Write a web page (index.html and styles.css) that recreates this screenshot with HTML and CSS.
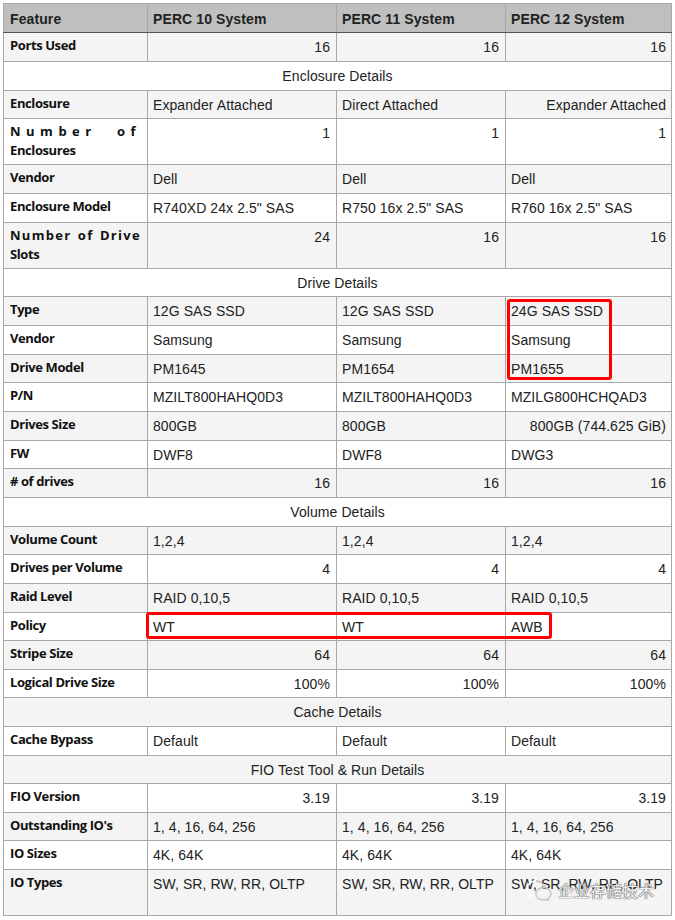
FILE: index.html
```html
<!DOCTYPE html>
<html lang="en">
<head>
<meta charset="utf-8">
<title>PERC comparison</title>
<link rel="stylesheet" href="styles.css">
</head>
<body>
<div class="sheet">
<table class="spec">
<colgroup><col class="c1"><col class="c2"><col class="c3"><col class="c4"></colgroup>
<thead><tr class="r29"><th>Feature</th><th>PERC 10 System</th><th>PERC 11 System</th><th>PERC 12 System</th></tr></thead>
<tbody>
<tr class="r29"><td class="k">Ports Used</td><td class="n">16</td><td class="n">16</td><td class="n">16</td></tr>
<tr class="r29"><td class="s" colspan="4">Enclosure Details</td></tr>
<tr class="r28"><td class="k">Enclosure</td><td>Expander Attached</td><td>Direct Attached</td><td class="n">Expander Attached</td></tr>
<tr class="r46"><td class="k"><span class="j wide">Number of</span>Enclosures</td><td class="n">1</td><td class="n">1</td><td class="n">1</td></tr>
<tr class="r29"><td class="k">Vendor</td><td>Dell</td><td>Dell</td><td>Dell</td></tr>
<tr class="r29"><td class="k">Enclosure Model</td><td>R740XD 24x 2.5" SAS</td><td>R750 16x 2.5" SAS</td><td>R760 16x 2.5" SAS</td></tr>
<tr class="r46"><td class="k"><span class="j mid">Number of Drive</span>Slots</td><td class="n">24</td><td class="n">16</td><td class="n">16</td></tr>
<tr class="r28"><td class="s" colspan="4">Drive Details</td></tr>
<tr class="r29"><td class="k">Type</td><td>12G SAS SSD</td><td>12G SAS SSD</td><td>24G SAS SSD</td></tr>
<tr class="r29"><td class="k">Vendor</td><td>Samsung</td><td>Samsung</td><td>Samsung</td></tr>
<tr class="r28"><td class="k">Drive Model</td><td>PM1645</td><td>PM1654</td><td>PM1655</td></tr>
<tr class="r29"><td class="k">P/N</td><td>MZILT800HAHQ0D3</td><td>MZILT800HAHQ0D3</td><td>MZILG800HCHQAD3</td></tr>
<tr class="r29"><td class="k">Drives Size</td><td>800GB</td><td>800GB</td><td class="n">800GB (744.625 GiB)</td></tr>
<tr class="r28"><td class="k">FW</td><td>DWF8</td><td>DWF8</td><td>DWG3</td></tr>
<tr class="r29"><td class="k"># of drives</td><td class="n">16</td><td class="n">16</td><td class="n">16</td></tr>
<tr class="r29"><td class="s" colspan="4">Volume Details</td></tr>
<tr class="r28"><td class="k">Volume Count</td><td>1,2,4</td><td>1,2,4</td><td>1,2,4</td></tr>
<tr class="r29"><td class="k">Drives per Volume</td><td class="n">4</td><td class="n">4</td><td class="n">4</td></tr>
<tr class="r29"><td class="k">Raid Level</td><td>RAID 0,10,5</td><td>RAID 0,10,5</td><td>RAID 0,10,5</td></tr>
<tr class="r28"><td class="k">Policy</td><td>WT</td><td>WT</td><td>AWB</td></tr>
<tr class="r29"><td class="k">Stripe Size</td><td class="n">64</td><td class="n">64</td><td class="n">64</td></tr>
<tr class="r28"><td class="k">Logical Drive Size</td><td class="n">100%</td><td class="n">100%</td><td class="n">100%</td></tr>
<tr class="r29"><td class="s" colspan="4">Cache Details</td></tr>
<tr class="r29"><td class="k">Cache Bypass</td><td>Default</td><td>Default</td><td>Default</td></tr>
<tr class="r28"><td class="s" colspan="4">FIO Test Tool &amp; Run Details</td></tr>
<tr class="r29"><td class="k">FIO Version</td><td class="n">3.19</td><td class="n">3.19</td><td class="n">3.19</td></tr>
<tr class="r28"><td class="k">Outstanding IO's</td><td>1, 4, 16, 64, 256</td><td>1, 4, 16, 64, 256</td><td>1, 4, 16, 64, 256</td></tr>
<tr class="r29"><td class="k">IO Sizes</td><td>4K, 64K</td><td>4K, 64K</td><td>4K, 64K</td></tr>
<tr class="r46"><td class="k">IO Types</td><td>SW, SR, RW, RR, OLTP</td><td>SW, SR, RW, RR, OLTP</td><td>SW, SR, RW, RR, OLTP</td></tr>
</tbody>
</table>
<div class="mark mark-drive"></div>
<div class="mark mark-policy"></div>
<div class="wm">
<svg class="wm-icon" viewBox="0 0 26 22" width="26" height="22" aria-hidden="true">
<path d="M10 2C5 2 1 5.300 1 9.400c0 2.400 1.300 4.400 3.400 5.800l-.9 2.800 3.200-1.700c1 .3 2 .4 3 .4" fill="none" stroke="#fff" stroke-width="1.600"/>
<path d="M10 2c4.300 0 8 2.600 8.800 6.100" fill="none" stroke="#bbb" stroke-width="1.400"/>
<path d="M17.500 8.500c-4.300 0-7.700 2.800-7.700 6.200s3.400 6.200 7.700 6.200c.9 0 1.700-.1 2.500-.4l2.700 1.400-.7-2.400c1.800-1.100 3-2.900 3-4.800 0-3.400-3.300-6.200-7.500-6.200z" fill="none" stroke="#c8c8c8" stroke-width="1.500"/>
</svg>
<span class="wm-text">企业存储技术</span>
</div>
</div>
</body>
</html>
```
FILE: styles.css
```css
html, body { margin: 0; padding: 0; background: #fff; }
.sheet {
  position: relative;
  width: 675px;
  height: 920px;
  overflow: hidden;
  padding: 3px 0 0 3px;
  box-sizing: border-box;
}
.spec {
  table-layout: fixed;
  border-collapse: collapse;
  width: 668px;
  font-family: "Liberation Sans", Arial, sans-serif;
  font-size: 14px;
  color: #222;
}
.c1 { width: 144px; }
.c2 { width: 189px; }
.c3 { width: 169px; }
.c4 { width: 166px; }
.r29 { height: 29px; }
.r28 { height: 28px; }
.r46 { height: 46px; }
.spec th, .spec td {
  border: 1px solid #a8a8a8;
  padding: 0 6px 0 5px;
  box-sizing: border-box;
  text-align: left;
  vertical-align: top;
  line-height: 16px;
  white-space: nowrap;
}
.spec th {
  background: #bfbfbf;
  border-bottom: 1px solid #555;
  padding-top: 7px;
  font-size: 14px;
  font-weight: bold;
  color: #222;
  letter-spacing: .1px;
}
.spec th:first-child { padding-left: 6px; }
.spec td:last-child { padding-right: 5px; }
.spec td { padding-top: 6px; letter-spacing: .08px; }
.spec tbody tr:nth-child(odd) td { background: #f4f4f4; }
.spec td.n { text-align: right; }
.spec td.s { text-align: center; }
.spec td.k {
  padding-top: 3px;
  padding-left: 6px;
  line-height: 18.500px;
  font-family: "Open Sans", "Noto Sans", sans-serif;
  font-size: 13px;
  font-weight: 700;
  letter-spacing: -.4px;
  color: #111;
}
.spec td.k .j {
  display: block;
  white-space: normal;
  text-align: justify;
  text-align-last: justify;
}
.spec td.k .wide { letter-spacing: 5.500px; }
.spec td.k .mid { letter-spacing: 1.300px; }
.mark {
  position: absolute;
  box-sizing: border-box;
  border: 3px solid #f00;
  border-radius: 3px;
}
.mark-drive { left: 507px; top: 299px; width: 105px; height: 81px; }
.mark-policy { left: 146px; top: 612px; width: 406px; height: 27px; }
.wm {
  position: absolute;
  left: 526px;
  top: 879px;
  display: flex;
  align-items: center;
  gap: 6px;
}
.wm-text {
  font-family: "Noto Sans CJK SC", sans-serif;
  font-size: 16px;
  line-height: 20px;
  color: #f4f4f4;
  text-shadow: 0 0 1px #333, 0 0 1px #333;
}
```
